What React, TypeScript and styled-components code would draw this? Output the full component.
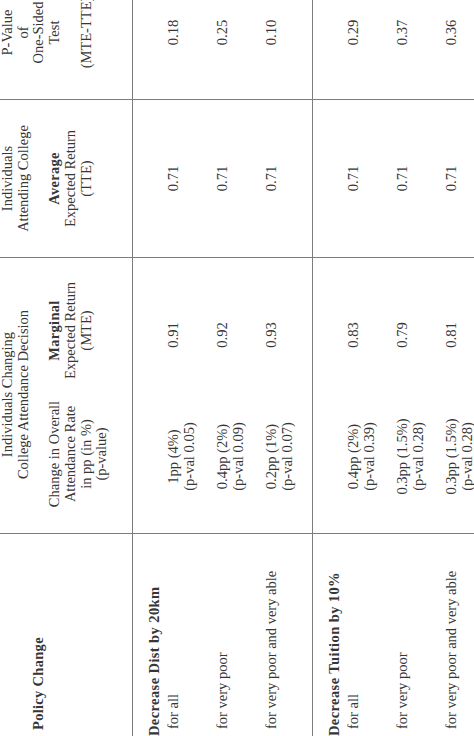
import styled, { createGlobalStyle } from "styled-components";

const GlobalStyle = createGlobalStyle`
  html, body {
    margin: 0;
    padding: 0;
    background: #fff;
  }
`;

const COLS = "202px 148px 128px 158px 134px";
const RULE = "#7c7c7c";
const INK = "#363636";

const Page = styled.div`
  width: 474px;
  height: 736px;
  overflow: hidden;
  background: #fff;
`;

// the table is typeset upright and then turned a quarter turn, like the printed page
const Sheet = styled.div`
  width: 736px;
  height: 474px;
  overflow: hidden;
  transform-origin: top left;
  transform: translateY(736px) rotate(-90deg);
  font-family: "Liberation Serif", "Times New Roman", serif;
  font-size: 14.5px;
  line-height: 15.7px;
  color: ${INK};
`;

const Head = styled.div`
  display: grid;
  grid-template-columns: ${COLS};
  height: 133px;
  border-bottom: 1px solid ${RULE};
  box-sizing: border-box;
`;

const Cell = styled.div<{ $rule?: boolean; $span?: number }>`
  border-left: ${({ $rule }) => ($rule ? `1px solid ${RULE}` : "none")};
  grid-column: ${({ $span }) => ($span ? `span ${$span}` : "auto")};
  text-align: center;
  white-space: nowrap;
  min-width: 0;
`;

const PolicyHead = styled(Cell)`
  text-align: left;
  font-weight: 700;
  letter-spacing: 0.3px;
  padding: 31px 0 0 6px;
`;

const SubHeads = styled.div`
  display: grid;
  grid-template-columns: 148px 127px;
  margin-top: 15.7px;
`;

const SubHead = styled.div<{ $shift?: number }>`
  text-align: center;
  padding-left: ${({ $shift }) => ($shift && $shift > 0 ? $shift : 0)}px;
  padding-right: ${({ $shift }) => ($shift && $shift < 0 ? -$shift : 0)}px;
`;

const Spanner = styled.div`
  padding-left: 2px;
`;

const Strong = styled.b`
  font-weight: 700;
  letter-spacing: 0.3px;
`;

const Group = styled.div<{ $last?: boolean }>`
  display: grid;
  grid-template-columns: ${COLS};
  grid-template-rows: 33px 49px 49px ${({ $last }) => ($last ? "1fr" : "48px")};
  height: ${({ $last }) => ($last ? "161px" : "180px")};
  border-bottom: ${({ $last }) => ($last ? "none" : `1px solid ${RULE}`)};
  box-sizing: border-box;
`;

const GroupTitle = styled(Cell)`
  text-align: left;
  font-weight: 700;
  padding: 14px 0 0 0;
  letter-spacing: 0.4px;
`;

const Label = styled(Cell)`
  text-align: left;
  padding-left: 7px;
`;

const Value = styled(Cell)<{ $shift?: number }>`
  padding-left: ${({ $shift }) => ($shift && $shift > 0 ? $shift : 0)}px;
  padding-right: ${({ $shift }) => ($shift && $shift < 0 ? -$shift : 0)}px;
`;

type Row = {
  label: string;
  change: string;
  pval: string;
  mte: string;
  tte: string;
  test: string;
};

type Policy = { title: string; rows: Row[] };

const policies: Policy[] = [
  {
    title: "Decrease Dist by 20km",
    rows: [
      { label: "for all", change: "1pp (4%)", pval: "(p-val 0.05)", mte: "0.91", tte: "0.71", test: "0.18" },
      { label: "for very poor", change: "0.4pp (2%)", pval: "(p-val 0.09)", mte: "0.92", tte: "0.71", test: "0.25" },
      { label: "for very poor and very able", change: "0.2pp (1%)", pval: "(p-val 0.07)", mte: "0.93", tte: "0.71", test: "0.10" },
    ],
  },
  {
    title: "Decrease Tuition by 10%",
    rows: [
      { label: "for all", change: "0.4pp (2%)", pval: "(p-val 0.39)", mte: "0.83", tte: "0.71", test: "0.29" },
      { label: "for very poor", change: "0.3pp (1.5%)", pval: "(p-val 0.28)", mte: "0.79", tte: "0.71", test: "0.37" },
      { label: "for very poor and very able", change: "0.3pp (1.5%)", pval: "(p-val 0.28)", mte: "0.81", tte: "0.71", test: "0.36" },
    ],
  },
];

const App = () => {
  return (
    <Page>
      <GlobalStyle />
      <Sheet>
        <Head>
          <PolicyHead>Policy Change</PolicyHead>
          <Cell $rule $span={2}>
            <Spanner>
              Individuals Changing
              <br />
              College Attendance Decision
            </Spanner>
            <SubHeads>
              <SubHead $shift={10}>
                Change in Overall
                <br />
                Attendance Rate
                <br />
                in pp (in %)
                <br />
                (p-value)
              </SubHead>
              <SubHead $shift={-18}>
                <Strong>Marginal</Strong>
                <br />
                Expected Return
                <br />
                (MTE)
              </SubHead>
            </SubHeads>
          </Cell>
          <Cell $rule>
            Individuals
            <br />
            Attending College
            <br />
            <br />
            <Strong>Average</Strong>
            <br />
            Expected Return
            <br />
            (TTE)
          </Cell>
          <Cell $rule>
            P-Value
            <br />
            of
            <br />
            One-Sided
            <br />
            Test
            <br />
            <br />
            (MTE-TTE)
          </Cell>
        </Head>
        {policies.map((p, gi) => (
          <Group key={p.title} $last={gi === policies.length - 1}>
            <GroupTitle>{p.title}</GroupTitle>
            <Cell $rule />
            <Cell />
            <Cell $rule />
            <Cell $rule />
            {p.rows.map((r) => [
              <Label key={r.label + "l"}>{r.label}</Label>,
              <Value key={r.label + "c"} $rule $shift={6}>
                {r.change}
                <br />
                {r.pval}
              </Value>,
              <Value key={r.label + "m"} $shift={-26}>
                {r.mte}
              </Value>,
              <Value key={r.label + "t"} $rule>
                {r.tte}
              </Value>,
              <Value key={r.label + "p"} $rule>
                {r.test}
              </Value>,
            ])}
          </Group>
        ))}
      </Sheet>
    </Page>
  );
};

export default App;
